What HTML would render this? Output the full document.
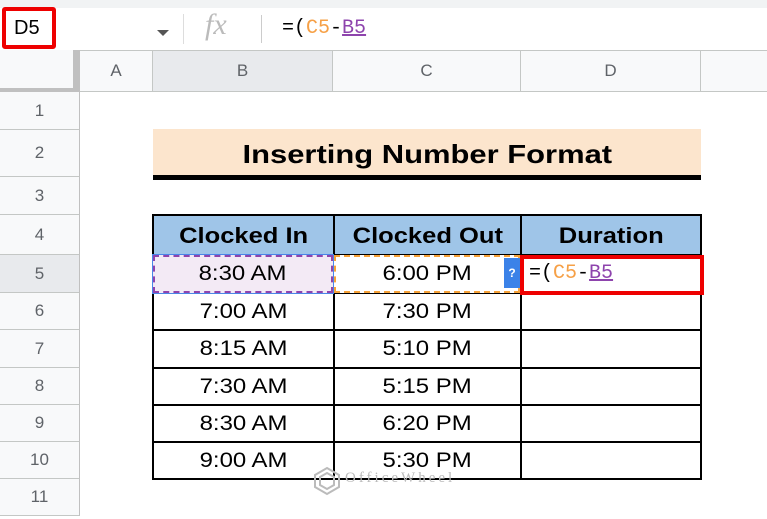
<!DOCTYPE html>
<html><head><style>
*{margin:0;padding:0;box-sizing:border-box}
body{width:767px;height:519px;overflow:hidden;background:#fff;font-family:"Liberation Sans",Arial,sans-serif;position:relative}
.a{position:absolute}
.rh{position:absolute;left:0;width:80px;background:#f8f9fa;border-right:1px solid #c0c0c0;border-bottom:1px solid #c4c7c5;color:#5f6368;font-size:17px;display:flex;align-items:center;justify-content:center}
.ch{position:absolute;top:50px;height:42px;background:#f8f9fa;border-right:1px solid #c4c7c5;border-bottom:1px solid #c4c7c5;border-top:1px solid #c4c7c5;color:#5f6368;font-size:17px;display:flex;align-items:center;justify-content:center}
.c{position:absolute;display:flex;align-items:center;justify-content:center;font-size:21px;color:#000}
.c span{display:inline-block;transform:scaleX(1.14)}
.h{background:#9fc5e8;font-weight:bold;font-size:22px}
.h span{transform:scaleX(1.16)}
.f{font-size:20px;font-family:'Liberation Mono',monospace}
</style></head><body>
<div class="a" style="left:0;top:0;width:767px;height:50px;background:#fff;border-top:8px solid #f1f3f4"></div>
<div class="a" style="left:2px;top:7px;width:54px;height:42px;border:4px solid #e00;border-radius:3px;font-size:20px;display:flex;align-items:center;padding-left:8px">D5</div>
<div class="a" style="left:157px;top:30px;width:0;height:0;border-left:6px solid transparent;border-right:6px solid transparent;border-top:6px solid #555"></div>
<div class="a" style="left:183px;top:14px;width:1px;height:30px;background:#ddd"></div>
<div class="a" style="left:205px;top:8px;font-family:'Liberation Serif',serif;font-style:italic;font-size:30px;color:#bbb">fx</div>
<div class="a" style="left:261px;top:15px;width:1px;height:28px;background:#ccc"></div>
<div class="a f" style="left:282px;top:17px">=(<span style="color:#f6a046">C5</span>-<span style="color:#8e44ad;text-decoration:underline">B5</span></div>
<div class="a" style="left:0;top:50px;width:80px;height:42px;background:#f8f9fa;border-right:7px solid #c0c0c0;border-bottom:4px solid #c0c0c0"></div>
<div class="ch" style="left:80px;width:73px">A</div>
<div class="ch" style="left:153px;width:180px;background:#e8eaed">B</div>
<div class="ch" style="left:333px;width:188px">C</div>
<div class="ch" style="left:521px;width:180px">D</div>
<div class="ch" style="left:701px;width:66px;border-right:none"></div>
<div class="rh" style="top:92px;height:38px">1</div>
<div class="rh" style="top:130px;height:47px">2</div>
<div class="rh" style="top:177px;height:38px">3</div>
<div class="rh" style="top:215px;height:40px">4</div>
<div class="rh" style="top:255px;height:38px;background:#e8eaed">5</div>
<div class="rh" style="top:293px;height:37px">6</div>
<div class="rh" style="top:330px;height:38px">7</div>
<div class="rh" style="top:368px;height:37px">8</div>
<div class="rh" style="top:405px;height:37px">9</div>
<div class="rh" style="top:442px;height:37px">10</div>
<div class="rh" style="top:479px;height:37px">11</div>
<div class="a" style="left:153px;top:129px;width:548px;height:46px;background:#fce5cd;display:flex;align-items:center;justify-content:center;font-weight:bold;font-size:26px;padding-top:5px"><span style="display:inline-block;transform:scaleX(1.19)">Inserting Number Format</span></div>
<div class="a" style="left:153px;top:175px;width:548px;height:5px;background:#000"></div>
<div class="a" style="left:152px;top:214px;width:550px;height:266px;border:2px solid #000"></div>
<div class="c h" style="left:154px;top:216px;width:179px;height:39px"><span>Clocked In</span></div>
<div class="c h" style="left:334px;top:216px;width:187px;height:39px"><span>Clocked Out</span></div>
<div class="c h" style="left:522px;top:216px;width:178px;height:39px"><span>Duration</span></div>
<div class="a" style="left:333px;top:214px;width:2px;height:266px;background:#000"></div>
<div class="a" style="left:520px;top:214px;width:2px;height:266px;background:#000"></div>
<div class="a" style="left:152px;top:254px;width:550px;height:2px;background:#000"></div>
<div class="a" style="left:152px;top:292px;width:550px;height:2px;background:#000"></div>
<div class="a" style="left:152px;top:329px;width:550px;height:2px;background:#000"></div>
<div class="a" style="left:152px;top:367px;width:550px;height:2px;background:#000"></div>
<div class="a" style="left:152px;top:404px;width:550px;height:2px;background:#000"></div>
<div class="a" style="left:152px;top:441px;width:550px;height:2px;background:#000"></div>
<div class="c" style="left:153px;top:255px;width:180px;height:38px;background:#f3eaf5;border:2px dashed #8e44ad;outline:1px solid #4a86e8"><span>8:30 AM</span></div>
<div class="c" style="left:334px;top:255px;width:186px;height:38px;background:#fff;border:2px dashed #f6a23a"><span>6:00 PM</span></div>
<div class="a" style="left:504px;top:258px;width:16px;height:30px;background:#3b82e8;color:#fff;font-size:12px;font-weight:bold;display:flex;align-items:center;justify-content:center">?</div>
<div class="a f" style="left:520px;top:255px;width:184px;height:40px;background:#fff;border:4px solid #e00;padding:3px 0 0 5px">=(<span style="color:#f6a046">C5</span>-<span style="color:#8e44ad;text-decoration:underline">B5</span></div>
<div class="c" style="left:154px;top:293px;width:179px;height:37px"><span>7:00 AM</span></div>
<div class="c" style="left:335px;top:293px;width:185px;height:37px"><span>7:30 PM</span></div>
<div class="c" style="left:154px;top:330px;width:179px;height:38px"><span>8:15 AM</span></div>
<div class="c" style="left:335px;top:330px;width:185px;height:38px"><span>5:10 PM</span></div>
<div class="c" style="left:154px;top:368px;width:179px;height:37px"><span>7:30 AM</span></div>
<div class="c" style="left:335px;top:368px;width:185px;height:37px"><span>5:15 PM</span></div>
<div class="c" style="left:154px;top:405px;width:179px;height:37px"><span>8:30 AM</span></div>
<div class="c" style="left:335px;top:405px;width:185px;height:37px"><span>6:20 PM</span></div>
<div class="c" style="left:154px;top:442px;width:179px;height:37px"><span>9:00 AM</span></div>
<div class="c" style="left:335px;top:442px;width:185px;height:37px"><span>5:30 PM</span></div>
<svg class="a" style="left:312px;top:466px" width="30" height="30" viewBox="0 0 30 30"><path d="M15 2 L27 9 V21 L15 28 L3 21 V9 Z M15 7 L22 11 V19 L15 23 L8 19 V11 Z" fill="none" stroke="#bbb" stroke-width="2"/></svg>
<div class="a" style="left:345px;top:470px;font-family:'Liberation Serif',serif;font-size:15px;letter-spacing:3px;color:#bbb">OfficeWheel</div>
</body></html>
